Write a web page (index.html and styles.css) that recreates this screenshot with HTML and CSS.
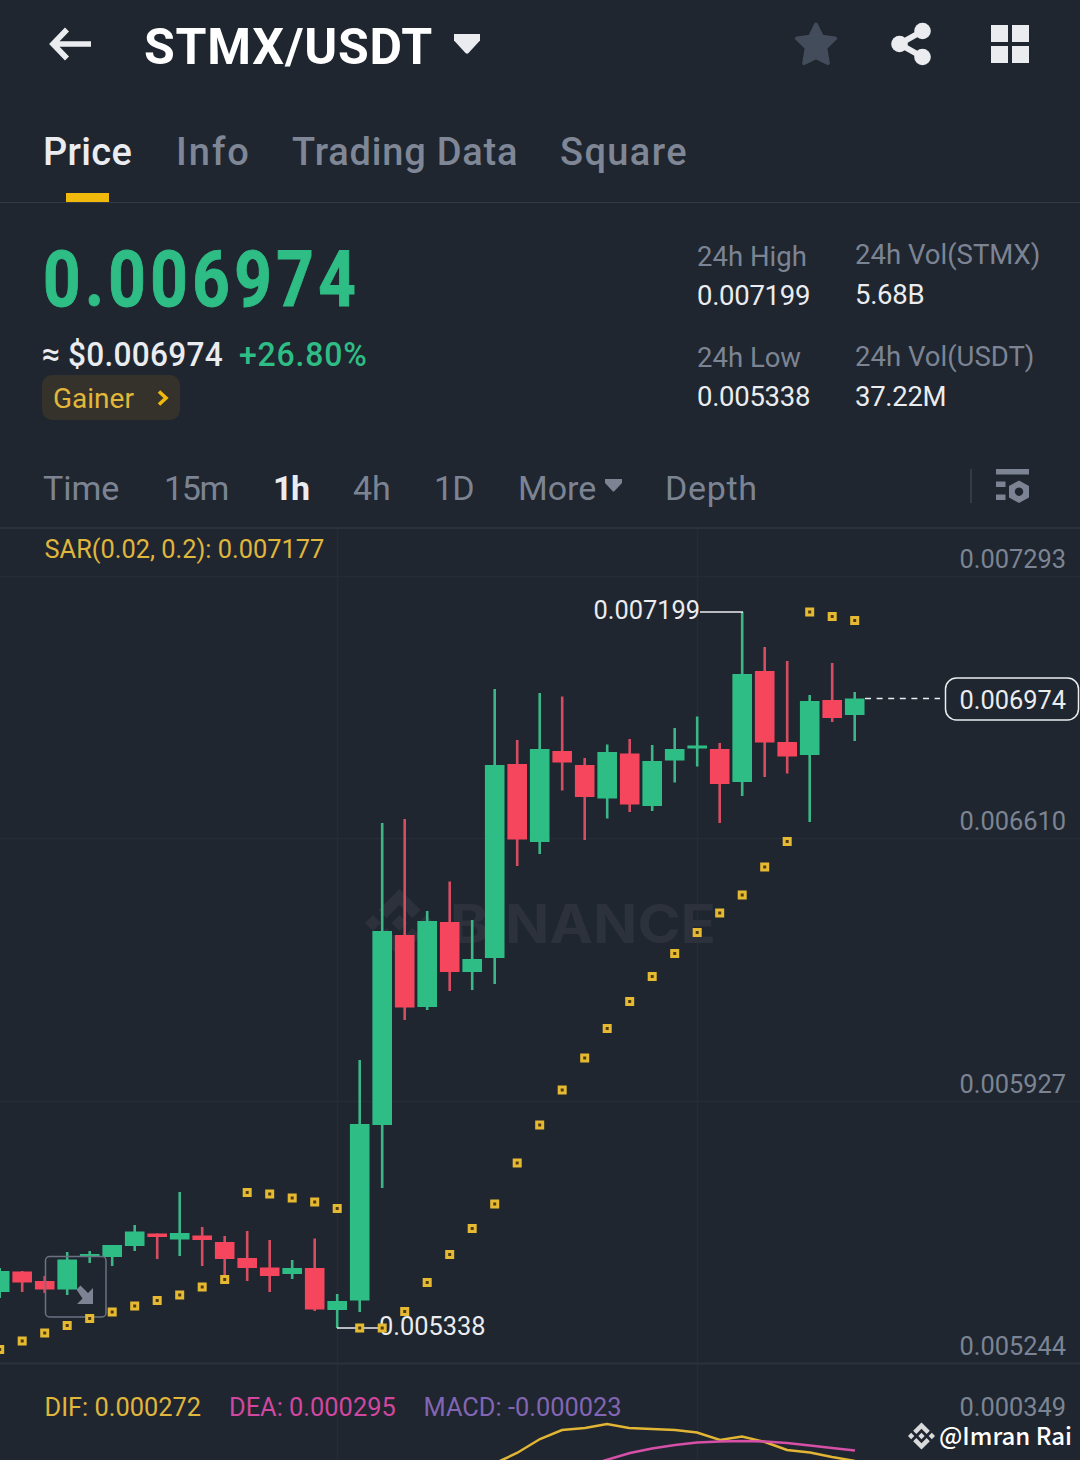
FILE: index.html
```
<!DOCTYPE html>
<html lang="en">
<head>
	<meta charset="UTF-8">
	<title>STMX/USDT</title>
	<link rel="stylesheet" href="styles.css">
</head>
<body>
	<div id="container">
		<div class="header">
			<svg class="back" width="44" height="36" viewBox="0 0 44 36">
				<path d="M42 18H5M18 3.5L4 18l14 14.500" fill="none" stroke="#eaecef" stroke-width="5.600"/>
			</svg>
			<h1 class="pair">STMX/USDT</h1>
			<svg class="caret" width="26" height="20" viewBox="0 0 26 20">
				<path d="M0 0h26v6.500L14.500 19q-1.500 1.500-3 0L0 6.500z" fill="#eaecef"/>
			</svg>
			<div class="actions">
				<svg width="42" height="44" viewBox="0 0 42 44">
					<path d="M21 2.500l5.800 12.200 13.200 1.700-9.700 9.300 2.500 15.300L21 35.200 9.200 41l2.500-15.300L2 16.400l13.200-1.700z" fill="#434c5a" stroke="#434c5a" stroke-width="4" stroke-linejoin="round"/>
				</svg>
				<svg width="40" height="44" viewBox="0 0 40 44">
					<path d="M31.500 9L8.500 22l23 13" fill="none" stroke="#eaecef" stroke-width="6"/>
					<circle cx="31.500" cy="9" r="8.300" fill="#eaecef"/>
					<circle cx="8.500" cy="22" r="8.300" fill="#eaecef"/>
					<circle cx="31.500" cy="35" r="8.300" fill="#eaecef"/>
				</svg>
				<svg width="38" height="38" viewBox="0 0 38 38">
					<path d="M0 0h17v17H0zM21 0h17v17H21zM0 21h17v17H0zM21 21h17v17H21z" fill="#eaecef"/>
				</svg>
			</div>
		</div>

		<ul class="tabs">
			<li class="tab-price selected">Price</li>
			<li class="tab-info">Info</li>
			<li class="tab-trading">Trading Data</li>
			<li class="tab-square">Square</li>
		</ul>

		<div class="summary">
			<div class="quote">
				<div class="last">0.006974</div>
				<div class="sub">
					<span class="approx">≈</span>
					<span class="fiat">$0.006974</span>
					<span class="change">+26.80%</span>
				</div>
				<div class="tag">
					<span>Gainer</span>
					<svg width="12" height="16" viewBox="0 0 12 16">
						<path d="M2 1.500L9 8l-7 6.500" fill="none" stroke="#f0b90b" stroke-width="3.600"/>
					</svg>
				</div>
			</div>
			<div class="stats">
				<dl>
					<dt>24h High</dt>
					<dd>0.007199</dd>
					<dt>24h Low</dt>
					<dd>0.005338</dd>
				</dl>
				<dl class="volume">
					<dt>24h Vol(STMX)</dt>
					<dd>5.68B</dd>
					<dt>24h Vol(USDT)</dt>
					<dd>37.22M</dd>
				</dl>
			</div>
		</div>

		<div class="intervals">
			<span class="i-time">Time</span>
			<span class="i-15m">15m</span>
			<span class="i-1h selected">1h</span>
			<span class="i-4h">4h</span>
			<span class="i-1d">1D</span>
			<span class="i-more">More</span>
			<svg class="more-caret" width="17" height="13" viewBox="0 0 17 13">
				<path d="M0 0h17v4L9.500 12q-1 1-2 0L0 4z" fill="#7c8494"/>
			</svg>
			<span class="i-depth">Depth</span>
			<div class="settings">
				<svg width="33" height="34" viewBox="0 0 33 34">
					<path d="M0 0h33v5.500H0zM0 12.500h9.500V18H0zM0 25.500h9.500V31H0z" fill="#7c8494"/>
					<path fill-rule="evenodd" d="M23 11.500l10 5.500v11.500L23 34l-10-5.500V17zM23 18.500a4.200 4.200 0 1 0 .01 0z" fill="#7c8494"/>
				</svg>
			</div>
		</div>

		<svg id="chart" width="1080" height="933" viewBox="0 527 1080 933">
			<g class="grid">
				<path d="M337.500 529V1460M697.500 529V1460M0 576.500H1080M0 838.500H1080M0 1101.500H1080"/>
				<path class="strong" d="M0 528H1080M0 1363.500H1080"/>
			</g>
			<g class="watermark">
				<path d="M399.500 889l21 21-8 8-13-13-13 13-8-8zM399.500 957l21-21-8-8-13 13-13-13-8 8zM373 915l8 8-8 8-8-8zM426 915l8 8-8 8-8-8zM399.500 915l8 8-8 8-8-8z"/>
				<text x="450" y="942.500" textLength="266" lengthAdjust="spacingAndGlyphs">BINANCE</text>
			</g>
			<g id="candles"></g>
			<g class="callout">
				<path d="M700 612H743M337 1328H381"/>
				<text x="593.500" y="619">0.007199</text>
				<text x="379" y="1335">0.005338</text>
			</g>
			<g class="expand">
				<rect x="45.500" y="1256.500" width="60.500" height="60.500" rx="4"/>
				<path d="M76.500 1289.500l4-4 7.500 7.500 5-5v16H77l5.500-5.500z"/>
			</g>
			<g id="sar"></g>
			<path class="last-line" d="M865 698.500H940"/>
			<rect class="last-box" x="945.500" y="678" width="133" height="42" rx="11"/>
			<text class="last-price" x="959.500" y="709">0.006974</text>
			<g class="axis">
				<text x="959.500" y="568">0.007293</text>
				<text x="959.500" y="830">0.006610</text>
				<text x="959.500" y="1093">0.005927</text>
				<text x="959.500" y="1355">0.005244</text>
				<text x="959.500" y="1416">0.000349</text>
			</g>
			<text class="dif" x="44.500" y="558">SAR(0.02, 0.2): 0.007177</text>
			<text class="dif" x="44.500" y="1416">DIF: 0.000272</text>
			<text class="dea" x="229" y="1416">DEA: 0.000295</text>
			<text class="macd" x="423.500" y="1416">MACD: -0.000023</text>
			<polyline class="dif-line" points="500,1461 517,1453 540,1439 562,1430 585,1428 607,1424 629,1428 652,1429 675,1430 697,1432.500 720,1440 742,1436.500 765,1442 787,1450 810,1452.500 832,1457 855,1461"/>
			<polyline class="dea-line" points="603,1461 630,1453 652,1448.500 675,1445 697,1442.500 720,1441.500 742,1441 765,1441.500 787,1443 810,1445.500 832,1448 855,1450.500"/>
		</svg>

		<div class="author">
			<svg width="27" height="28" viewBox="0 0 68 68">
				<path d="M34 0l21 21-8 8-13-13-13 13-8-8zM34 68l21-21-8-8-13 13-13-13-8 8zM8 26l8 8-8 8-8-8zM60 26l8 8-8 8-8-8zM34 26l8 8-8 8-8-8z" fill="#d9dadc"/>
			</svg>
			<span>@Imran Rai</span>
		</div>
	</div>
	<script src="chart.js"></script>
</body>
</html>
```

FILE: styles.css
```
*{
	margin: 0;
	padding: 0;
	box-sizing: border-box;
}
ul{
	list-style: none;
}
body{
	background: #1f262f;
	font-family: Roboto, "Liberation Sans", sans-serif;
	color: #eaecef;
}
#container{
	width: 1080px;
	height: 1460px;
	position: relative;
	overflow: hidden;
	white-space: nowrap;
}
svg{
	display: block;
	flex: none;
}
.header{
	display: flex;
	align-items: center;
	height: 88px;
	padding: 0 51px 0 49px;
}
.pair{
	width: 310px;
	margin-left: 51px;
	font-size: 50px;
	font-weight: 700;
	line-height: 60px;
	padding-top: 5px;
	letter-spacing: .8px;
	color: #fff;
}
.actions{
	display: flex;
	align-items: center;
	margin-left: auto;
}
.actions svg + svg{
	margin-left: 54px;
}
.actions svg + svg + svg{
	margin-left: 60px;
}
.tabs{
	display: flex;
	height: 115px;
	padding-left: 43px;
	border-bottom: 1px solid #333a46;
	font-size: 38px;
	font-weight: 500;
	color: #7f8796;
}
.tabs li{
	height: 114px;
	padding-top: 42px;
	line-height: 44px;
}
.tabs .selected{
	color: #eaecef;
	position: relative;
}
.tabs .selected::after{
	content: "";
	position: absolute;
	left: 23px;
	bottom: 0;
	width: 43px;
	height: 9px;
	background: #f0b90b;
}
.tab-price{
	width: 133px;
	letter-spacing: .3px;
}
.tab-info{
	width: 116px;
	letter-spacing: 2px;
}
.tab-trading{
	width: 268px;
	letter-spacing: .8px;
}
.tab-square{
	letter-spacing: 1.4px;
}
.summary{
	display: flex;
	justify-content: space-between;
	height: 244px;
	padding-left: 42px;
}
.last{
	height: 92px;
	margin-top: 31px;
	margin-left: 1px;
	line-height: 92px;
	font-size: 77px;
	font-weight: 700;
	letter-spacing: 5.2px;
	color: #2ebd85;
	-webkit-text-stroke: 1px #2ebd85;
	transform: scaleX(.85);
	transform-origin: 0 50%;
}
.sub{
	display: flex;
	height: 49px;
	line-height: 56px;
	font-size: 34px;
	font-weight: 500;
}
.approx{
	width: 26px;
	font-size: 32px;
}
.fiat{
	width: 171px;
	transform: scaleX(.93);
	transform-origin: 0 50%;
	letter-spacing: .3px;
}
.change{
	color: #2ebd85;
	transform: scaleX(.94);
	transform-origin: 0 50%;
	letter-spacing: .9px;
}
.tag{
	display: flex;
	align-items: center;
	justify-content: space-between;
	width: 138px;
	height: 45px;
	padding: 1px 11px 0;
	border-radius: 10px;
	background: #34322b;
	color: #e3b73a;
	font-size: 28px;
}
.stats{
	display: flex;
	width: 383px;
	font-size: 27.5px;
}
.stats dl{
	width: 158px;
	padding-top: 34px;
}
.stats .volume{
	width: 225px;
	padding-top: 32px;
}
.stats dt{
	height: 39px;
	line-height: 39px;
	color: #7c8494;
}
.stats dd{
	height: 62px;
	line-height: 40px;
	letter-spacing: -.3px;
}
.stats .volume dd{
	line-height: 42px;
	height: 63px;
}
.intervals{
	display: flex;
	align-items: center;
	height: 80px;
	padding: 2px 51px 0 43px;
	font-size: 34px;
	color: #7c8494;
}
.intervals .selected{
	color: #eaecef;
	font-weight: 700;
}
.i-time{
	width: 121px;
}
.i-15m{
	width: 109px;
	letter-spacing: -1.3px;
}
.i-1h{
	width: 80px;
	letter-spacing: -1.5px;
}
.i-4h{
	width: 81px;
}
.i-1d{
	width: 84px;
	letter-spacing: -.8px;
}
.i-more{
	width: 87px;
}
.more-caret{
	margin-right: 43px;
	margin-top: -5px;
}
.i-depth{
	letter-spacing: .7px;
}
.settings{
	display: flex;
	justify-content: flex-end;
	width: 59px;
	height: 34px;
	margin-left: auto;
	margin-top: -5px;
	border-left: 2px solid #343b47;
}

/* chart */
#chart{
	font-size: 25.4px;
}
.grid path{
	fill: none;
	stroke: #252c36;
	stroke-width: 1.5;
}
.grid .strong{
	stroke: #2c323d;
	stroke-width: 2;
}
.watermark{
	fill: #2c313c;
	font-family: Inter, sans-serif;
	font-size: 53px;
	font-weight: 700;
}
.up{
	fill: #2ebd85;
}
.down{
	fill: #f6465d;
}
.wick.up{
	fill: #3cb587;
}
.wick.down{
	fill: #d64d62;
}
#sar rect{
	fill: #4f3a10;
	stroke: #e6b932;
	stroke-width: 3;
}
.callout path{
	stroke: #eaecef;
	stroke-width: 1.500;
}
.callout text, .last-price{
	fill: #eaecef;
}
.expand rect{
	fill: none;
	stroke: #6b7282;
	stroke-width: 1.500;
}
.expand path{
	fill: #7c8494;
}
.last-line{
	stroke: #eaecef;
	stroke-width: 1.500;
	stroke-dasharray: 6 5.600;
}
.last-box{
	fill: #1f262f;
	stroke: #eaecef;
	stroke-width: 1.500;
}
.axis text{
	fill: #7c8494;
}
.dif{
	fill: #e0b63c;
}
.dea{
	fill: #d1479f;
}
.macd{
	fill: #8265b3;
}
.dif-line, .dea-line{
	fill: none;
	stroke: #e3b535;
	stroke-width: 2.500;
}
.dea-line{
	stroke: #d650a8;
}
.author{
	position: absolute;
	left: 908px;
	top: 1422px;
	display: flex;
	align-items: center;
	height: 28px;
	line-height: 28px;
	font-family: "Noto Sans CJK SC", sans-serif;
	font-size: 24px;
	font-weight: 500;
	color: #fff;
}
.author span{
	margin-left: 4px;
	margin-top: -3px;
}
```

FILE: chart.js
```
var oCandles = document.getElementById('candles');
var oSar = document.getElementById('sar');
var step = 22.5;
// direction, high, body top, body bottom, low
var aCandle = [
	['up', 1268, 1271, 1292, 1298],
	['down', 1271, 1271.5, 1282.5, 1292],
	['down', 1276, 1281, 1289.5, 1293],
	['up', 1252, 1259.5, 1289.5, 1295],
	['up', 1251, 1254, 1257, 1263],
	['up', 1245, 1245, 1257, 1266],
	['up', 1225, 1231.5, 1246, 1251],
	['down', 1233.5, 1233.5, 1237, 1259],
	['up', 1192, 1233, 1239.5, 1256],
	['down', 1227, 1235.5, 1240, 1266],
	['down', 1236, 1242, 1259, 1275],
	['down', 1231, 1258, 1268, 1281],
	['down', 1240, 1267.5, 1276, 1292],
	['up', 1260, 1268, 1274, 1279],
	['down', 1238.5, 1268, 1309.5, 1311],
	['up', 1294, 1301, 1310, 1328],
	['up', 1060, 1124, 1300.5, 1312],
	['up', 823, 931, 1125, 1188],
	['down', 819, 935, 1007.5, 1020],
	['up', 911, 921, 1007, 1010],
	['down', 881.5, 922, 972, 991],
	['up', 920, 959, 972, 990],
	['up', 689, 765, 958, 984],
	['down', 740, 764, 839.5, 866],
	['up', 693, 749, 842, 854],
	['down', 696.5, 751, 762.5, 790.5],
	['down', 758, 765, 797, 840],
	['up', 744.5, 752, 798.5, 818.5],
	['down', 739, 753.5, 804.5, 812],
	['up', 745, 761, 806, 811],
	['up', 728, 749, 760.5, 782.5],
	['up', 716.5, 745.5, 748.5, 766.5],
	['down', 743, 749, 784, 823],
	['up', 612, 674, 782, 796],
	['down', 647, 671, 742.5, 777],
	['down', 661, 742, 756.5, 773.5],
	['up', 695, 701, 755, 822],
	['down', 663, 700, 718, 722],
	['up', 692, 698.5, 715, 741]
];
var aSar = [1349.5, 1341, 1333, 1325.5, 1318.5, 1312, 1306, 1300.5, 1295, 1287, 1279.5,
	1192.5, 1194, 1198, 1202, 1208.5, 1328, 1328, 1311.5, 1282.5, 1254.5, 1228.5, 1204,
	1163, 1125, 1090, 1058, 1028.5, 1001.5, 976.5, 953.5, 932.5, 913, 895, 867, 841.5,
	612, 616.5, 620.5];

function addRect(parent, cls, x, y, w, h){
	var rect = document.createElementNS('http://www.w3.org/2000/svg', 'rect');
	if(cls){
		rect.setAttribute('class', cls);
	}
	rect.setAttribute('x', x);
	rect.setAttribute('y', y);
	rect.setAttribute('width', w);
	rect.setAttribute('height', h);
	parent.appendChild(rect);
}
for(var i = 0; i < aCandle.length; i++){
	var c = aCandle[i];
	var x = i * step - 0.3;
	addRect(oCandles, 'wick ' + c[0], x - 1.3, c[1], 2.6, c[4] - c[1]);
	addRect(oCandles, c[0], x - 9.8, c[2], 19.6, c[3] - c[2]);
	addRect(oSar, '', x - 3, aSar[i] - 3, 6, 6);
}
```
